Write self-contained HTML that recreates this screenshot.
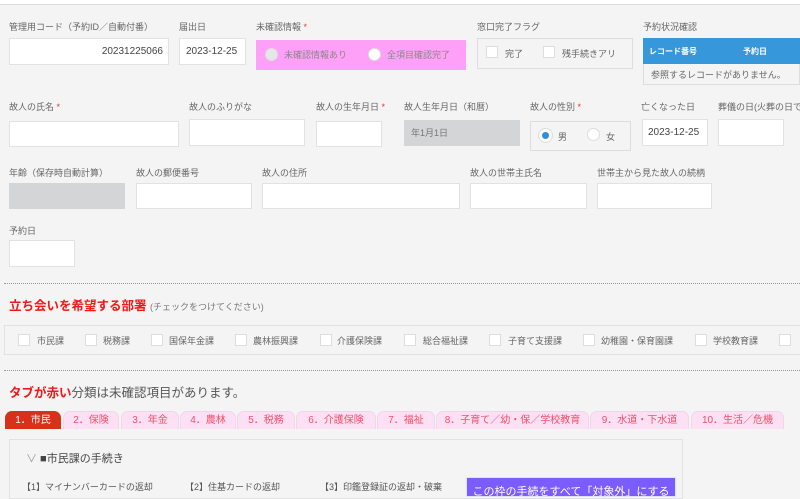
<!DOCTYPE html>
<html><head><meta charset="utf-8"><style>
*{box-sizing:border-box;margin:0;padding:0}
body{width:800px;height:491px;overflow:hidden;background:#f4f4f4;font-family:"Liberation Sans","Noto Sans CJK JP",sans-serif;color:#555;position:relative}
.a{position:absolute;white-space:nowrap}
.l{font-size:9px;color:#666}
.i{position:absolute;background:#fff;border:1px solid #e2e2e2}
.g{background:#d3d5d6;border-color:#d3d5d6}
.r{color:#f03030}
.cb{position:absolute;width:12px;height:12px;background:#fff;border:1px solid #ddd}
.rad{position:absolute;width:13px;height:13px;border-radius:50%;background:#fff;border:1px solid #ddd}
.t{position:absolute;top:411px;height:18px;background:#fde0f3;color:#f0506a;font-size:10px;border-radius:7px 7px 0 0;text-align:center;line-height:18px;border:1px solid #eed8e8;border-bottom:none}
.dl{position:absolute;left:4px;right:0;border-top:1px dotted #999}
</style></head><body>
<div class="a" style="left:0;top:0;width:800px;height:5px;background:#fff;border-bottom:1px solid #ddd"></div>

<div class="a l" style="left:9px;top:20px">管理用コード（予約ID／自動付番）</div>
<div class="i" style="left:9px;top:38px;width:160px;height:27px;font-size:10px;text-align:right;padding-right:5px;line-height:25px;color:#444">20231225066</div>
<div class="a l" style="left:179px;top:20px">届出日</div>
<div class="i" style="left:179px;top:38px;width:67px;height:27px;font-size:10px;line-height:25px;padding-left:6px;color:#444">2023-12-25</div>
<div class="a l" style="left:256px;top:20px">未確認情報 <span class="r">*</span></div>
<div class="a" style="left:256px;top:40px;width:210px;height:30px;background:#ffa0f8"></div>
<div class="rad" style="left:265px;top:48px;background:#e4e6e8"></div>
<div class="a l" style="left:284px;top:48px;color:#888">未確認情報あり</div>
<div class="rad" style="left:368px;top:48px"></div>
<div class="a l" style="left:387px;top:48px;color:#888">全項目確認完了</div>

<div class="a l" style="left:477px;top:20px">窓口完了フラグ</div>
<div class="a" style="left:477px;top:38px;width:156px;height:31px;border:1px solid #ddd"></div>
<div class="cb" style="left:486px;top:46px"></div><div class="a l" style="left:505px;top:47px">完了</div>
<div class="cb" style="left:543px;top:46px"></div><div class="a l" style="left:562px;top:47px">残手続きアリ</div>

<div class="a l" style="left:643px;top:20px">予約状況確認</div>
<div class="a" style="left:643px;top:38px;width:157px;height:26px;background:#3697da;color:#fff;font-size:8px;font-weight:bold"><span class="a" style="left:6px;top:8px">レコード番号</span><span class="a" style="left:100px;top:8px">予約日</span></div>
<div class="a l" style="left:643px;top:64px;width:157px;height:21px;border:1px solid #ddd;border-top:none;padding:4px 0 0 7px">参照するレコードがありません。</div>

<div class="a l" style="left:9px;top:100px">故人の氏名 <span class="r">*</span></div>
<div class="i" style="left:9px;top:121px;width:170px;height:26px"></div>
<div class="a l" style="left:189px;top:100px">故人のふりがな</div>
<div class="i" style="left:189px;top:119px;width:116px;height:27px"></div>
<div class="a l" style="left:316px;top:100px">故人の生年月日 <span class="r">*</span></div>
<div class="i" style="left:316px;top:121px;width:66px;height:26px"></div>
<div class="a l" style="left:404px;top:100px">故人生年月日（和暦）</div>
<div class="i g" style="left:404px;top:120px;width:116px;height:26px;font-size:9px;line-height:24px;padding-left:6px;color:#777">年1月1日</div>
<div class="a l" style="left:530px;top:100px">故人の性別 <span class="r">*</span></div>
<div class="a" style="left:530px;top:121px;width:101px;height:30px;border:1px solid #ddd"></div>
<div class="rad" style="left:539px;top:129px;border:3px solid #fff;background:#2f8fde;box-shadow:0 0 0 1px #ddd"></div><div class="a l" style="left:558px;top:130px">男</div>
<div class="rad" style="left:587px;top:128px"></div><div class="a l" style="left:606px;top:130px">女</div>
<div class="a l" style="left:641px;top:100px">亡くなった日</div>
<div class="i" style="left:642px;top:119px;width:66px;height:27px;font-size:10px;line-height:25px;padding-left:5px;color:#444">2023-12-25</div>
<div class="a l" style="left:718px;top:100px">葬儀の日(火葬の日で</div>
<div class="i" style="left:718px;top:119px;width:66px;height:27px"></div>

<div class="a l" style="left:9px;top:166px">年齢（保存時自動計算）</div>
<div class="i g" style="left:9px;top:183px;width:116px;height:26px"></div>
<div class="a l" style="left:136px;top:166px">故人の郵便番号</div>
<div class="i" style="left:136px;top:183px;width:116px;height:26px"></div>
<div class="a l" style="left:262px;top:166px">故人の住所</div>
<div class="i" style="left:262px;top:183px;width:198px;height:26px"></div>
<div class="a l" style="left:470px;top:166px">故人の世帯主氏名</div>
<div class="i" style="left:470px;top:183px;width:117px;height:26px"></div>
<div class="a l" style="left:597px;top:166px">世帯主から見た故人の続柄</div>
<div class="i" style="left:597px;top:183px;width:115px;height:26px"></div>
<div class="a l" style="left:9px;top:224px">予約日</div>
<div class="i" style="left:9px;top:240px;width:66px;height:27px"></div>

<div class="dl" style="top:283px"></div>
<div class="a" style="left:9px;top:295px;font-size:12.5px;font-weight:bold;color:#f01818">立ち会いを希望する部署 <span style="font-size:9px;font-weight:normal;color:#777">(チェックをつけてください)</span></div>
<div class="a" style="left:4px;top:325px;width:800px;height:30px;border:1px solid #e2e2e2"></div>
<div class="cb" style="left:18px;top:334px"></div><div class="a l" style="left:37px;top:334px">市民課</div>
<div class="cb" style="left:85px;top:334px"></div><div class="a l" style="left:103px;top:334px">税務課</div>
<div class="cb" style="left:151px;top:334px"></div><div class="a l" style="left:169px;top:334px">国保年金課</div>
<div class="cb" style="left:235px;top:334px"></div><div class="a l" style="left:253px;top:334px">農林振興課</div>
<div class="cb" style="left:320px;top:334px"></div><div class="a l" style="left:337px;top:334px">介護保険課</div>
<div class="cb" style="left:404px;top:334px"></div><div class="a l" style="left:423px;top:334px">総合福祉課</div>
<div class="cb" style="left:489px;top:334px"></div><div class="a l" style="left:508px;top:334px">子育て支援課</div>
<div class="cb" style="left:583px;top:334px"></div><div class="a l" style="left:601px;top:334px">幼稚園・保育園課</div>
<div class="cb" style="left:695px;top:334px"></div><div class="a l" style="left:713px;top:334px">学校教育課</div>
<div class="cb" style="left:779px;top:334px"></div>

<div class="dl" style="top:370px"></div>
<div class="a" style="left:9px;top:382px;font-size:12.5px;color:#555"><b style="color:#f01818">タブが赤い</b>分類は未確認項目があります。</div>

<div class="t" style="left:5px;width:56px;background:#d8301a;color:#fff;border-color:#d8301a">1．市民</div>
<div class="t" style="left:63px;width:56px">2．保険</div>
<div class="t" style="left:121px;width:58px">3．年金</div>
<div class="t" style="left:180px;width:56px">4．農林</div>
<div class="t" style="left:237px;width:58px">5．税務</div>
<div class="t" style="left:296px;width:80px">6．介護保険</div>
<div class="t" style="left:377px;width:58px">7．福祉</div>
<div class="t" style="left:436px;width:153px">8．子育て／幼・保／学校教育</div>
<div class="t" style="left:590px;width:99px">9．水道・下水道</div>
<div class="t" style="left:691px;width:93px">10．生活／危機</div>

<div class="a" style="left:9px;top:439px;width:674px;height:60px;border:1px solid #e2e2e2"></div>
<div class="a" style="left:26px;top:450px;font-size:11px;color:#444"><span style="color:#999">∨</span> ■市民課の手続き</div>
<div class="a l" style="left:22px;top:480px;color:#555">【1】マイナンバーカードの返却</div>
<div class="a l" style="left:185px;top:480px;color:#555">【2】住基カードの返却</div>
<div class="a l" style="left:320px;top:480px;color:#555">【3】印鑑登録証の返却・破棄</div>
<div class="a" style="left:466px;top:477px;width:210px;height:20px;background:#7b5cff;color:#fff;font-size:11px;text-align:center;padding-top:5px;border:1px solid #e0e0ff">この枠の手続をすべて「対象外」にする</div>
</body></html>
